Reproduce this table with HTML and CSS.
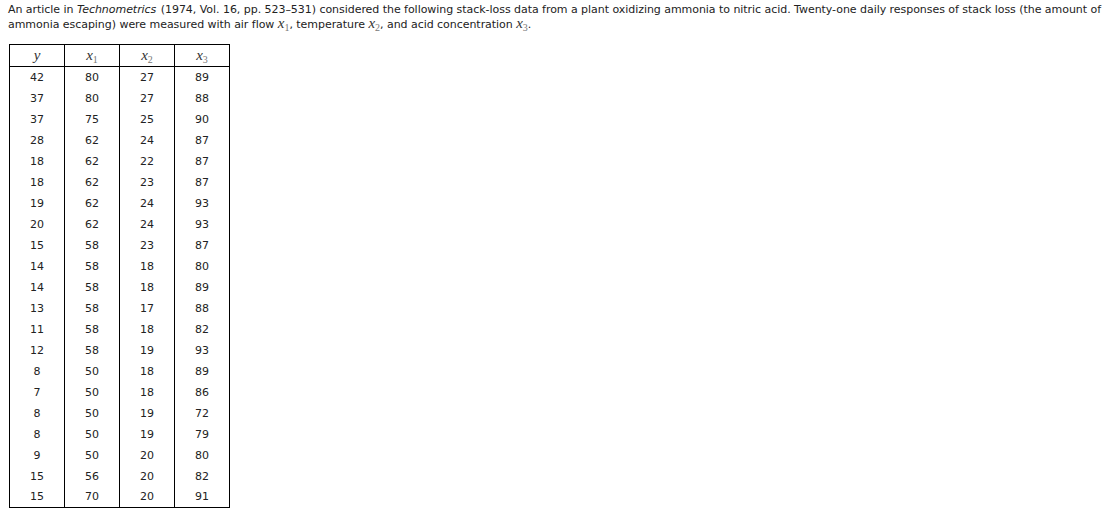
FILE: index.html
```html
<!DOCTYPE html>
<html lang="en">
<head>
  <meta charset="UTF-8">
  <title>Stack-loss data</title>
  <link rel="stylesheet" href="styles.css">
</head>
<body>
  <p class="intro">
    An article in <em>Technometrics</em> (1974, Vol. 16, pp. 523&ndash;531) considered the following stack-loss data from a plant oxidizing ammonia to nitric acid. Twenty-one daily responses of stack loss (the amount of<br>
    ammonia escaping) were measured with air flow <span class="math">x<sub>1</sub></span>, temperature <span class="math">x<sub>2</sub></span>, and acid concentration <span class="math">x<sub>3</sub></span>.
  </p>

  <table class="data">
    <thead>
      <tr>
        <th><span class="math">y</span></th>
        <th><span class="math">x<sub>1</sub></span></th>
        <th><span class="math">x<sub>2</sub></span></th>
        <th><span class="math">x<sub>3</sub></span></th>
      </tr>
    </thead>
    <tbody>
      <tr><td>42</td><td>80</td><td>27</td><td>89</td></tr>
      <tr><td>37</td><td>80</td><td>27</td><td>88</td></tr>
      <tr><td>37</td><td>75</td><td>25</td><td>90</td></tr>
      <tr><td>28</td><td>62</td><td>24</td><td>87</td></tr>
      <tr><td>18</td><td>62</td><td>22</td><td>87</td></tr>
      <tr><td>18</td><td>62</td><td>23</td><td>87</td></tr>
      <tr><td>19</td><td>62</td><td>24</td><td>93</td></tr>
      <tr><td>20</td><td>62</td><td>24</td><td>93</td></tr>
      <tr><td>15</td><td>58</td><td>23</td><td>87</td></tr>
      <tr><td>14</td><td>58</td><td>18</td><td>80</td></tr>
      <tr><td>14</td><td>58</td><td>18</td><td>89</td></tr>
      <tr><td>13</td><td>58</td><td>17</td><td>88</td></tr>
      <tr><td>11</td><td>58</td><td>18</td><td>82</td></tr>
      <tr><td>12</td><td>58</td><td>19</td><td>93</td></tr>
      <tr><td>8</td><td>50</td><td>18</td><td>89</td></tr>
      <tr><td>7</td><td>50</td><td>18</td><td>86</td></tr>
      <tr><td>8</td><td>50</td><td>19</td><td>72</td></tr>
      <tr><td>8</td><td>50</td><td>19</td><td>79</td></tr>
      <tr><td>9</td><td>50</td><td>20</td><td>80</td></tr>
      <tr><td>15</td><td>56</td><td>20</td><td>82</td></tr>
      <tr><td>15</td><td>70</td><td>20</td><td>91</td></tr>
    </tbody>
  </table>
</body>
</html>
```

FILE: styles.css
```css
* {
  margin: 0;
  padding: 0;
  box-sizing: border-box;
}

body {
  font-family: 'DejaVu Sans', Verdana, sans-serif;
  font-size: 11px;
  color: #222;
  background: #fff;
  padding: 3px 8px;
}

.intro {
  line-height: 13px;
  letter-spacing: -0.045px;
}

.intro em {
  padding-right: 1px;
}

.math {
  font-family: 'Liberation Serif', 'Times New Roman', serif;
  font-style: italic;
  font-size: 15px;
  line-height: 1;
  color: #333;
  letter-spacing: 0;
}

.math sub {
  font-style: normal;
  font-size: 10px;
  color: #777;
  vertical-align: -3px;
  line-height: 0;
}

.data {
  margin: 13px 0 0 1px;
  border-collapse: collapse;
  border: 1px solid #000;
}

.data th,
.data td {
  width: 55px;
  text-align: center;
}

.data th {
  height: 22px;
  font-weight: normal;
  border: 1px solid #000;
}

.data td {
  height: 21px;
  border-left: 1px solid #000;
  border-right: 1px solid #000;
}
```
